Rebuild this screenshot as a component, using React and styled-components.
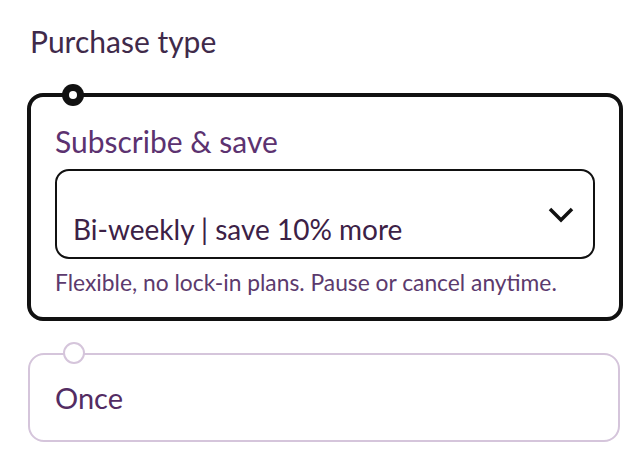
import React, { useState } from "react";
import styled, { createGlobalStyle } from "styled-components";

const GlobalStyle = createGlobalStyle`
  html, body {
    margin: 0;
    padding: 0;
    background: #ffffff;
  }
  body {
    font-family: Lato, "Noto Sans", sans-serif;
  }
  * {
    box-sizing: border-box;
  }
`;

const Page = styled.div`
  width: 642px;
  padding: 22px 0 0 27px;
`;

const Title = styled.h2`
  margin: 0 0 32px 3px;
  font-size: 30px;
  line-height: 39px;
  font-weight: 400;
  color: #3f2a4a;
`;

const Options = styled.div`
  display: flex;
  flex-direction: column;
  gap: 32px;
`;

const OptionCard = styled.div`
  position: relative;
  display: flex;
  flex-direction: column;
  justify-content: ${(p) => (p.$selected ? "flex-start" : "center")};
  width: ${(p) => (p.$selected ? "596px" : "592px")};
  min-height: 89px;
  margin-left: ${(p) => (p.$selected ? "0" : "1px")};
  padding: ${(p) => (p.$selected ? "25px 24px 22px" : "0 25px")};
  border: ${(p) => (p.$selected ? "4px solid #111111" : "2px solid #d5c5db")};
  border-radius: 16px;
  cursor: pointer;
`;

const Radio = styled.span`
  position: absolute;
  top: -13px;
  left: ${(p) => (p.$selected ? "31px" : "33px")};
  width: 22px;
  height: 22px;
  border-radius: 50%;
  background: ${(p) => (p.$selected ? "#111111" : "#ffffff")};
  border: ${(p) => (p.$selected ? "none" : "2px solid #d5c5db")};

  &::after {
    content: "";
    display: ${(p) => (p.$selected ? "block" : "none")};
    position: absolute;
    top: 7px;
    left: 7px;
    width: 8px;
    height: 8px;
    border-radius: 50%;
    background: #ffffff;
  }
`;

const OptionLabel = styled.div`
  font-size: ${(p) => (p.$selected ? "30px" : "29px")};
  line-height: ${(p) => (p.$selected ? "39px" : "35px")};
  color: ${(p) => (p.$selected ? "#5c3270" : "#532c63")};
`;

const Select = styled.div`
  display: flex;
  justify-content: space-between;
  height: 90px;
  margin-top: 8px;
  padding: 0 19px 0 16px;
  border: 2px solid #111111;
  border-radius: 14px;
`;

const SelectValue = styled.span`
  align-self: flex-end;
  margin-bottom: 11px;
  font-size: 28px;
  line-height: 34px;
  color: #3c2146;
`;

const Chevron = styled.svg`
  align-self: center;
  width: 26px;
  height: 20px;
`;

const Hint = styled.p`
  margin: 10px 0 0;
  font-size: 22.8px;
  line-height: 26px;
  color: #5c3a6d;
`;

export default function App() {
  const [type, setType] = useState("subscribe");

  return (
    <Page>
      <GlobalStyle />
      <Title>Purchase type</Title>
      <Options>
        <OptionCard
          $selected={type === "subscribe"}
          onClick={() => setType("subscribe")}
        >
          <Radio $selected={type === "subscribe"} />
          <OptionLabel $selected={type === "subscribe"}>
            Subscribe &amp; save
          </OptionLabel>
          {type === "subscribe" && (
            <>
              <Select>
                <SelectValue>Bi-weekly | save 10% more</SelectValue>
                <Chevron viewBox="0 0 26 20">
                  <polyline
                    points="2,5 13,16 24,5"
                    fill="none"
                    stroke="#111111"
                    strokeWidth="3.5"
                  />
                </Chevron>
              </Select>
              <Hint>Flexible, no lock-in plans. Pause or cancel anytime.</Hint>
            </>
          )}
        </OptionCard>
        <OptionCard $selected={type === "once"} onClick={() => setType("once")}>
          <Radio $selected={type === "once"} />
          <OptionLabel $selected={type === "once"}>Once</OptionLabel>
        </OptionCard>
      </Options>
    </Page>
  );
}
